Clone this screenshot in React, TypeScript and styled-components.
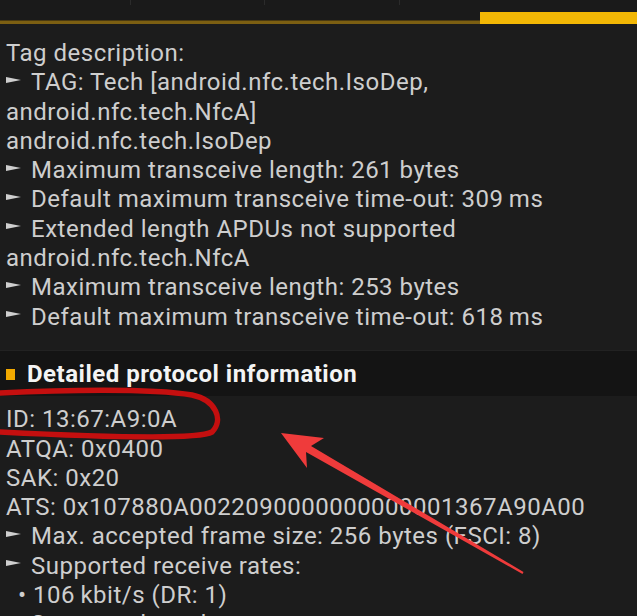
import React from "react";
import styled, {createGlobalStyle} from "styled-components";

const GlobalStyle = createGlobalStyle`
  html, body {
    margin: 0;
    padding: 0;
    background: #1c1c1c;
    overflow: hidden;
  }
  body {
    font-family: Roboto, "Noto Sans", "Liberation Sans", sans-serif;
  }
`

const Screen = styled.div`
  position: relative;
  width: 637px;
  height: 616px;
  overflow: hidden;
  background: #1c1c1c;
`

const TopBar = styled.div`
  display: flex;
  flex-direction: column;
  height: 24px;
  background: #1a1a1a;
`

const TabLabels = styled.div`
  display: flex;
  height: 12px;
`

const TabCell = styled.div<{ $w: number }>`
  width: ${p => p.$w}px;
  border-right: 1px solid #2b2b2b;
  height: 5px;
`

const IndicatorRow = styled.div`
  display: flex;
  align-items: flex-end;
  height: 12px;
`

const Track = styled.div`
  flex: 1;
  height: 4px;
  background: #7c5f12;
  border-top: 1px solid #4a3a10;
  box-sizing: border-box;
`

const Indicator = styled.div`
  width: 157px;
  height: 12px;
  background: #f2b705;
`

const Section = styled.section`
  padding: 15px 0 0 6px;
`

const Line = styled.div<{ $indent?: number }>`
  color: #cecece;
  font-size: 24px;
  line-height: 29.3px;
  letter-spacing: 0.5px;
  white-space: nowrap;
  padding-left: ${p => p.$indent ?? 0}px;
`

const Wedge = styled.span`
  display: inline-block;
  width: 0;
  height: 0;
  border-left: 15px solid #cecece;
  border-top: 3px solid transparent;
  border-bottom: 3px solid transparent;
  margin-right: 10px;
  vertical-align: 0.32em;
`

const HeaderBand = styled.div`
  display: flex;
  align-items: center;
  gap: 12px;
  margin-top: 18px;
  padding: 9px 6px 7px;
  background: #141414;
  border-top: 1px solid #222;
`

const Square = styled.span`
  width: 9px;
  height: 11px;
  background: #f2a900;
`

const HeaderTitle = styled.h2`
  margin: 0;
  color: #f4f4f4;
  font-size: 24px;
  font-weight: 700;
  letter-spacing: 0.5px;
  line-height: 29.3px;
`

const Body = styled.div`
  padding: 9px 0 0 6px;
`

const Annotation = styled.svg`
  position: absolute;
  left: 0;
  top: 0;
  pointer-events: none;
`

const Item: React.FC<{ children: React.ReactNode }> = ({children}) => (
    <Line><Wedge/>{children}</Line>
)

const App: React.FC = () => {
    return (
        <Screen>
            <GlobalStyle/>
            <TopBar>
                <TabLabels>
                    <TabCell $w={130}/>
                    <TabCell $w={133}/>
                    <TabCell $w={134}/>
                </TabLabels>
                <IndicatorRow>
                    <Track/>
                    <Indicator/>
                </IndicatorRow>
            </TopBar>
            <Section>
                <Line>Tag description:</Line>
                <Item>TAG: Tech [android.nfc.tech.IsoDep,</Item>
                <Line>android.nfc.tech.NfcA]</Line>
                <Line>android.nfc.tech.IsoDep</Line>
                <Item>Maximum transceive length: 261 bytes</Item>
                <Item>Default maximum transceive time-out: 309{"\u2009"}ms</Item>
                <Item>Extended length APDUs not supported</Item>
                <Line>android.nfc.tech.NfcA</Line>
                <Item>Maximum transceive length: 253 bytes</Item>
                <Item>Default maximum transceive time-out: 618{"\u2009"}ms</Item>
            </Section>
            <HeaderBand>
                <Square/>
                <HeaderTitle>Detailed protocol information</HeaderTitle>
            </HeaderBand>
            <Body>
                <Line>ID: 13:67:A9:0A</Line>
                <Line>ATQA: 0x0400</Line>
                <Line>SAK: 0x20</Line>
                <Line>ATS: 0x107880A0022090000000000001367A90A00</Line>
                <Item>Max. accepted frame size: 256 bytes (FSCI: 8)</Item>
                <Item>Supported receive rates:</Item>
                <Line $indent={12}>• 106{"\u2009"}kbit/s (DR: 1)</Line>
                <Item>Supported send rates:</Item>
            </Body>
            <Annotation width={637} height={616} viewBox="0 0 637 616">
                <path
                    d="M0,393 C60,390 150,388 192,395 C216,400 224,420 212,432 C198,440 100,437 0,432"
                    fill="none" stroke="#c40f0f" strokeWidth={5.5} strokeLinecap="round"/>
                <polygon
                    points="281,433 324,438 311,446 523.5,572 522.5,574 306,452 307,468"
                    fill="#ef3b3b"/>
            </Annotation>
        </Screen>
    )
}

export default App
